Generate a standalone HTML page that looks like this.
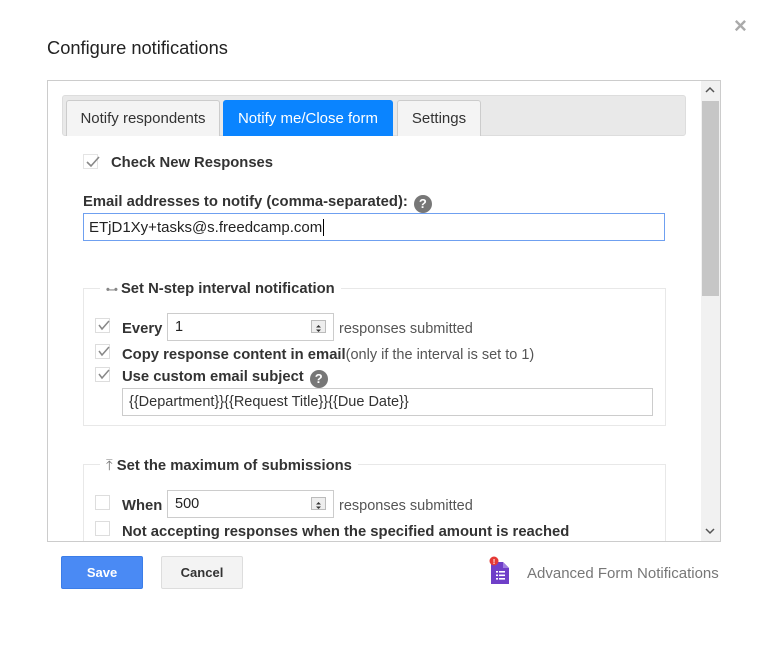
<!DOCTYPE html>
<html><head><meta charset="utf-8"><style>
*{box-sizing:border-box;margin:0;padding:0}
body{width:768px;height:659px;background:#fff;font-family:"Liberation Sans",Arial,sans-serif;color:#222;position:relative;overflow:hidden}
.a{position:absolute;white-space:nowrap}
.b{font-weight:bold}
.t{font-size:14.5px;padding-top:1px}
.b.t{font-size:14.8px}
.chk{position:absolute;width:15px;height:15px;border:1px solid #ddd;background:#fff}
.chk svg{position:absolute;left:1px;top:0}
.q{display:inline-block;vertical-align:-2px;margin-left:6px;width:18px;height:18px;border-radius:50%;background:#777;color:#fff;font-weight:bold;font-size:13px;text-align:center;line-height:18px}
.inp{position:absolute;border:1px solid #ccc;background:#fff;font-size:14.5px;padding-left:7px}
.spin{position:absolute;width:15px;height:13px;border:1px solid #bbb;background:#eee}
.fs{position:absolute;border:1px solid #e8e8e8}
.tab{position:absolute;top:100px;height:36px;font-size:15px;text-align:center;line-height:35px;border:1px solid #ccc;border-bottom:none;border-radius:3px 3px 0 0;background:#f4f4f4;color:#333}
</style></head><body>
<div class="a" style="left:47px;top:37px;font-size:18.3px;color:#222">Configure notifications</div>
<div class="a" style="left:734px;top:13px;font-size:22px;color:#aaa;font-weight:bold">×</div>

<div class="a" style="left:47px;top:80px;width:674px;height:462px;border:1px solid #ccc;overflow:hidden">
  <div class="a" style="left:653px;top:0;width:19px;height:460px;background:#f1f1f1"></div>
  <div class="a" style="left:654px;top:20px;width:17px;height:195px;background:#c6c6c6"></div>
  <svg class="a" style="left:657px;top:5px" width="10" height="8"><path d="M1 6 L5 2 L9 6" stroke="#555" stroke-width="1.5" fill="none"/></svg>
  <svg class="a" style="left:657px;top:446px" width="10" height="8"><path d="M1 2 L5 6 L9 2" stroke="#555" stroke-width="1.5" fill="none"/></svg>
</div>

<div class="a" style="left:62px;top:95px;width:624px;height:41px;background:#e9e9e9;border:1px solid #ddd;border-radius:3px"></div>
<div class="tab" style="left:66px;width:154px">Notify respondents</div>
<div class="tab" style="left:223px;width:170px;background:#0a84ff;border-color:#0a84ff;color:#fff">Notify me/Close form</div>
<div class="tab" style="left:397px;width:84px">Settings</div>

<div class="chk" style="left:83px;top:154px;border:1px solid #e4e4e4"><svg width="15" height="14"><path d="M2 7 L6 11 L14 2" stroke="#888" stroke-width="1.6" fill="none"/></svg></div>
<div class="a b t" style="left:111px;top:154px;color:#333">Check New Responses</div>

<div class="a b t" style="left:83px;top:193px;color:#333">Email addresses to notify (comma-separated):<span class="q">?</span></div>
<div class="inp" style="left:83px;top:213px;width:582px;height:28px;border-color:#6fa0f0;line-height:27px;font-size:15px;padding-left:5px">ETjD1Xy+tasks@s.freedcamp.com<span style="border-left:1px solid #000;margin-left:1px"></span></div>

<div class="fs" style="left:83px;top:288px;width:583px;height:138px"></div>
<div class="a b t" style="left:100px;top:280px;padding:1px 6px 0;background:#fff;color:#333"><span style="color:#888;font-size:11px;letter-spacing:-1px">•–•</span> Set N-step interval notification</div>
<div class="chk" style="left:95px;top:318px"><svg width="14" height="13"><path d="M2 6 L5 10 L12 2" stroke="#888" stroke-width="1.5" fill="none"/></svg></div>
<div class="a b t" style="left:122px;top:320px;color:#333">Every</div>
<div class="inp" style="left:167px;top:313px;width:167px;height:28px;line-height:27px">1</div>
<div class="spin" style="left:311px;top:320px"><svg width="13" height="11"><path d="M4 4.5 L6.5 2 L9 4.5Z M4 6.5 L6.5 9 L9 6.5Z" fill="#333"/></svg></div>
<div class="a t" style="left:339px;top:320px;color:#555">responses submitted</div>
<div class="chk" style="left:95px;top:344px"><svg width="14" height="13"><path d="M2 6 L5 10 L12 2" stroke="#888" stroke-width="1.5" fill="none"/></svg></div>
<div class="a t" style="left:122px;top:346px;color:#555"><b style="color:#333;font-size:14.8px">Copy response content in email</b>(only if the interval is set to 1)</div>
<div class="chk" style="left:95px;top:367px"><svg width="14" height="13"><path d="M2 6 L5 10 L12 2" stroke="#888" stroke-width="1.5" fill="none"/></svg></div>
<div class="a b t" style="left:122px;top:368px;color:#333">Use custom email subject<span class="q">?</span></div>
<div class="inp" style="left:122px;top:388px;width:531px;height:28px;line-height:27px;padding-left:6px;color:#333">{{Department}}{{Request Title}}{{Due Date}}</div>

<div class="fs" style="left:83px;top:464px;width:583px;height:90px"></div>
<div class="a b t" style="left:100px;top:456px;padding:1px 6px 0;background:#fff;color:#333"><span style="color:#777;font-weight:normal;font-size:15px">⤒</span> Set the maximum of submissions</div>
<div class="chk" style="left:95px;top:495px"></div>
<div class="a b t" style="left:122px;top:497px;color:#333">When</div>
<div class="inp" style="left:167px;top:490px;width:167px;height:28px;line-height:27px">500</div>
<div class="spin" style="left:311px;top:497px"><svg width="13" height="11"><path d="M4 4.5 L6.5 2 L9 4.5Z M4 6.5 L6.5 9 L9 6.5Z" fill="#333"/></svg></div>
<div class="a t" style="left:339px;top:497px;color:#555">responses submitted</div>
<div class="chk" style="left:95px;top:521px"></div>
<div class="a b t" style="left:122px;top:523px;color:#333">Not accepting responses when the specified amount is reached</div>

<div class="a" style="left:47px;top:541px;width:674px;height:20px;background:#fff"></div>
<div class="a" style="left:47px;top:541px;width:674px;height:1px;background:#ccc"></div>

<div class="a b" style="left:61px;top:556px;width:82px;height:33px;background:#4a8af4;border:1px solid #3b7de8;border-radius:2px;color:#fff;font-size:13px;text-align:center;line-height:32px">Save</div>
<div class="a b" style="left:161px;top:556px;width:82px;height:33px;background:#f3f3f3;border:1px solid #ddd;border-radius:2px;color:#333;font-size:13px;text-align:center;line-height:32px">Cancel</div>

<svg class="a" style="left:487px;top:556px" width="28" height="30">
<path d="M4 6 H16 L22 12 V28 H4Z" fill="#6f3fc8"/>
<path d="M16 6 V12 H22Z" fill="#9f7fe0"/>
<rect x="9" y="15" width="2" height="1.6" fill="#fff"/><rect x="12" y="15" width="6" height="1.6" fill="#fff"/>
<rect x="9" y="18.5" width="2" height="1.6" fill="#fff"/><rect x="12" y="18.5" width="6" height="1.6" fill="#fff"/>
<rect x="9" y="22" width="2" height="1.6" fill="#fff"/><rect x="12" y="22" width="6" height="1.6" fill="#fff"/>
<circle cx="7" cy="5" r="4.5" fill="#e53935"/>
<text x="7" y="8" font-size="7" fill="#fff" text-anchor="middle" font-family="Liberation Sans" font-weight="bold">!</text>
</svg>
<div class="a" style="left:527px;top:565px;font-size:15px;color:#777">Advanced Form Notifications</div>
</body></html>
